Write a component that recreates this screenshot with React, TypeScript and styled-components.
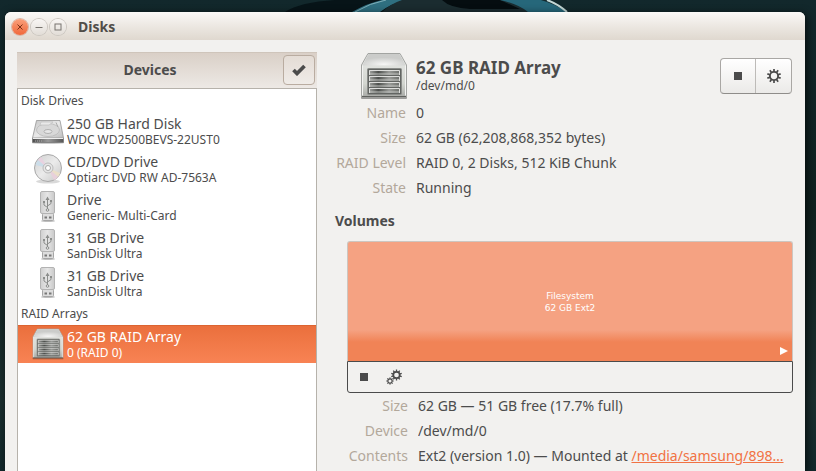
import React from 'react';
import styled, { createGlobalStyle, css } from 'styled-components';

const sans = '"Noto Sans", "Open Sans", sans-serif';

const GlobalStyle = createGlobalStyle`
  *, *::before, *::after { box-sizing: border-box; }
  body { margin: 0; background: #10262a; font-family: ${sans}; color: #4c4c4c; overflow: hidden; }
  button { font: inherit; color: inherit; padding: 0; margin: 0; border: 0; background: none; }
  dl, dt, dd, ul, h1, h2, h3, p { margin: 0; padding: 0; }
`;

const Desktop = styled.div`
  position: relative;
  min-height: 100vh;
  padding: 12px 11px 0 5px;
  background: linear-gradient(to bottom, #12282c 0, #10211f 45%, #1b2f2f 85%, #12282b 100%);
`;

const Wallpaper = styled.svg`
  position: absolute;
  top: 0;
  left: 0;
  width: 100%;
  height: 12px;
`;

const Window = styled.main`
  position: relative;
  display: flex;
  flex-direction: column;
  height: calc(100vh - 12px);
  background: #f2f1ef;
  border-radius: 6px 6px 0 0;
  box-shadow: 2px 2px 8px rgba(0, 0, 0, 0.7);
  overflow: hidden;
`;

const TitleBar = styled.header`
  display: flex;
  align-items: center;
  flex: none;
  gap: 3px;
  height: 28px;
  padding: 1px 7px 0;
  background: linear-gradient(#fbfaf8 0, #efebe6 40%, #dfd8cf 100%);
`;

const WindowButton = styled.button<{ $close?: boolean }>`
  display: grid;
  place-items: center;
  width: 16px;
  height: 16px;
  border-radius: 50%;
  box-shadow: 0 0 0 1px ${p => (p.$close ? '#d9b5a5' : '#cbc6c0')};
  color: ${p => (p.$close ? '#7a3218' : '#77736e')};
  background: ${p => (p.$close
    ? 'linear-gradient(#f9a07b, #f0683a)'
    : 'linear-gradient(#f8f6f4, #e2ddd7)')};
`;

const WindowTitle = styled.h1`
  margin-left: 9px;
  font-size: 14px;
  line-height: 20px;
  font-weight: 700;
  color: #504c48;
`;

const Body = styled.div`
  display: flex;
  flex: 1;
  gap: 18px;
  min-height: 0;
  padding: 12px 12px 0;
`;

const Sidebar = styled.nav`
  display: flex;
  flex-direction: column;
  flex: none;
  width: 300px;
`;

const SidebarHeader = styled.div`
  display: grid;
  grid-template-columns: 1fr 32px;
  align-items: center;
  height: 36px;
  padding-right: 2px;
  background: linear-gradient(#d9cfc6, #ede9e5);
  box-shadow: inset 0 1px #cfc5bb;
`;

const SidebarTitle = styled.h2`
  font-size: 14px;
  line-height: 20px;
  text-align: center;
`;

const CheckButton = styled.button`
  display: grid;
  place-items: center;
  height: 30px;
  border: 1px solid #b9aca0;
  border-radius: 4px;
  background: linear-gradient(#e4dcd5, #efebe7);
`;

const DeviceList = styled.div`
  flex: 1;
  border: 1px solid #b6b2ab;
  border-bottom: 0;
  background: #fff;
`;

const Category = styled.h3`
  height: 23px;
  padding-left: 3px;
  font-size: 12px;
  line-height: 24px;
  font-weight: 400;
`;

const DeviceRow = styled.button<{ $selected?: boolean }>`
  display: flex;
  align-items: center;
  gap: 3px;
  width: 100%;
  height: 38px;
  padding-left: 14px;
  text-align: left;
  ${p => p.$selected && css`
    color: #fff;
    background: linear-gradient(#ea6f3c, #f88354);
    box-shadow: inset 0 1px #dc6431;
  `}
`;

const DeviceText = styled.span`
  display: flex;
  flex-direction: column;
`;

const DeviceName = styled.span`
  font-size: 14px;
  line-height: 17px;
`;

const DeviceModel = styled.span`
  font-size: 12px;
  line-height: 15px;
`;

const Details = styled.section`
  display: flex;
  flex-direction: column;
  flex: 1;
  min-width: 0;
`;

const Heading = styled.header`
  display: grid;
  grid-template-columns: 73px 1fr auto;
  gap: 8px;
  align-items: center;
  height: 48px;
`;

const HeadingIcon = styled.div`
  display: flex;
  justify-content: flex-end;
`;

const HeadingName = styled.h2`
  font-size: 17px;
  line-height: 20px;
  font-weight: 700;
`;

const HeadingPath = styled.p`
  font-size: 12px;
  line-height: 16px;
`;

const ButtonGroup = styled.div`
  display: flex;
  height: 36px;
  margin-right: 1px;
  border: 1px solid #a9a7a4;
  border-bottom-color: #8f8d8a;
  border-radius: 4px;
  background: linear-gradient(#fff, #ebeae8);
`;

const GroupButton = styled.button`
  display: grid;
  place-items: center;
  width: 34px;
  & + & {
    width: 36px;
    border-left: 1px solid #bdbbb8;
  }
`;

const Facts = styled.dl<{ $volume?: boolean }>`
  display: grid;
  grid-template-columns: ${p => (p.$volume ? '73px' : '71px')} minmax(0, 1fr);
  column-gap: 10px;
  grid-auto-rows: 25px;
  font-size: 14px;
  line-height: 25px;
  white-space: nowrap;
`;

const Label = styled.dt`
  justify-self: end;
  color: #b3a89b;
`;

const Value = styled.dd`
  overflow: hidden;
  text-overflow: ellipsis;
`;

const MountLink = styled.a`
  color: #f17243;
  text-decoration: underline;
`;

const SectionTitle = styled.h3`
  margin: 11px 0 10px;
  font-size: 14px;
  line-height: 20px;
`;

const VolumePanel = styled.div`
  margin-left: 12px;
`;

const Volume = styled.button`
  position: relative;
  display: flex;
  flex-direction: column;
  align-items: center;
  justify-content: center;
  width: 100%;
  height: 120px;
  border: 1px solid #cdc6c0;
  border-bottom: 0;
  border-radius: 3px 3px 0 0;
  color: #fff;
  font-family: "DejaVu Sans", sans-serif;
  font-size: 9px;
  line-height: 12px;
  background: linear-gradient(#f5a282 0, #f5a282 74%, #f18356 84%, #f18356 100%);
`;

const MountedMark = styled.svg`
  position: absolute;
  right: 4px;
  bottom: 6px;
`;

const VolumeToolbar = styled.div`
  display: flex;
  align-items: center;
  height: 32px;
  border: 1px solid #4b4b4b;
  border-radius: 0 0 3px 3px;
`;

const ToolButton = styled.button`
  display: grid;
  place-items: center;
  width: 32px;
  height: 30px;
  & + & {
    width: 28px;
  }
`;

function StopIcon() {
  return (
    <svg width="8" height="8" viewBox="0 0 8 8" aria-hidden="true">
      <rect width="8" height="8" fill="#4b4b4b" />
    </svg>
  );
}

interface GearProps {
  cx: number;
  cy: number;
  r: number;
  ring: number;
  outer: number;
  tooth: number;
  teeth: number;
}

function GearShape({ cx, cy, r, ring, outer, tooth, teeth }: GearProps) {
  return (
    <g stroke="#4b4b4b" fill="none" transform={`translate(${cx} ${cy})`}>
      <circle r={r} strokeWidth={ring} />
      {Array.from({ length: teeth }, (_, i) => (
        <path key={i} strokeWidth={tooth} d={`M0 ${-r}V${-outer}`} transform={`rotate(${(i * 360) / teeth})`} />
      ))}
    </g>
  );
}

function GearIcon() {
  return (
    <svg width="14" height="14" viewBox="0 0 14 14" aria-hidden="true">
      <GearShape cx={7} cy={7} r={4.1} ring={1.900} outer={7} tooth={1.700} teeth={10} />
    </svg>
  );
}

function GearsIcon() {
  return (
    <svg width="16" height="16" viewBox="0 0 16 16" aria-hidden="true">
      <GearShape cx={10.500} cy={6} r={3.200} ring={1.700} outer={5.500} tooth={1.300} teeth={10} />
      <GearShape cx={4} cy={12} r={2.100} ring={1.100} outer={3.700} tooth={1} teeth={8} />
    </svg>
  );
}

function HardDiskIcon() {
  return (
    <svg width="32" height="32" viewBox="0 0 32 32" aria-hidden="true">
      <defs>
        <linearGradient id="hdTop" x1="0" y1="0" x2="1" y2="1">
          <stop offset="0" stopColor="#c6c6c6" />
          <stop offset=".5" stopColor="#e9e9e9" />
          <stop offset="1" stopColor="#bdbdbd" />
        </linearGradient>
        <linearGradient id="hdFront">
          <stop offset="0" stopColor="#4c4c4c" />
          <stop offset=".5" stopColor="#999" />
          <stop offset="1" stopColor="#555" />
        </linearGradient>
      </defs>
      <ellipse cx="16" cy="28" rx="16" ry="1" fill="#000" opacity=".2" />
      <path d="M4.500 5.500H28L31.500 23H.5Z" fill="url(#hdTop)" stroke="#969696" strokeWidth=".8" />
      <path d="M.5 23.500H31.500V27.500H.5Z" fill="url(#hdFront)" stroke="#777" strokeWidth=".8" />
      <path d="M1 23.500H31" stroke="#eee" />
      <ellipse cx="16" cy="15" rx="11.500" ry="6.500" fill="#d8d8d8" stroke="#b9b9b9" strokeWidth=".8" />
      <ellipse cx="16" cy="16.500" rx="4" ry="2" fill="#e6e6e6" stroke="#a5a5a5" strokeWidth=".8" />
      <path d="M9 7H21L17 10H8Z" fill="#e9e9e9" stroke="#bbb" strokeWidth=".6" />
      <path d="M24 7.500L26 12" stroke="#aaa" />
      <path d="M3 26H11" stroke="#aaa" strokeDasharray="1 1" />
    </svg>
  );
}

function DiscIcon() {
  return (
    <svg width="32" height="32" viewBox="0 0 32 32" aria-hidden="true">
      <defs>
        <linearGradient id="disc" x1="0" y1="0" x2="1" y2="1">
          <stop offset="0" stopColor="#cfcfcf" />
          <stop offset=".5" stopColor="#ebebeb" />
          <stop offset="1" stopColor="#c6c6c6" />
        </linearGradient>
      </defs>
      <ellipse cx="16" cy="28.500" rx="12" ry="2" fill="#000" opacity=".15" />
      <circle cx="16" cy="15" r="13.500" fill="url(#disc)" stroke="#a9a9a9" />
      <path d="M16 15L3.500 12A13 13 0 0 1 6 7Z" fill="#cbdde9" />
      <path d="M16 15L6 7A13 13 0 0 1 9 4Z" fill="#e8d2e0" />
      <path d="M16 15L28 20A13 13 0 0 1 26 24Z" fill="#ebdfc8" />
      <path d="M16 15L26 24A13 13 0 0 1 22 27Z" fill="#e8d0da" />
      <circle cx="16" cy="15" r="5" fill="#e6e6e6" stroke="#bbb" />
      <circle cx="16" cy="15" r="2.500" fill="#fff" stroke="#aaa" />
    </svg>
  );
}

function UsbIcon() {
  return (
    <svg width="32" height="32" viewBox="0 0 32 32" aria-hidden="true">
      <defs>
        <linearGradient id="usb">
          <stop offset="0" stopColor="#cfcfcf" />
          <stop offset=".5" stopColor="#e6e6e6" />
          <stop offset="1" stopColor="#c9c9c9" />
        </linearGradient>
      </defs>
      <ellipse cx="16" cy="30" rx="7" ry="1" fill="#000" opacity=".25" />
      <rect x="10.500" y="22.500" width="11" height="7" rx="1" fill="#ddd" stroke="#a5a5a5" />
      <path d="M12.500 26.500H15M17 26.500H19.500" stroke="#777" strokeWidth="2" />
      <rect x="8.500" y="0.500" width="14" height="22" rx="1.500" fill="url(#usb)" stroke="#b3b3b3" />
      <g stroke="#8b8d8b" fill="none">
        <path d="M15.500 18V8M15.500 16.500L12 14V11M15.500 15L19 12.500V10" />
        <circle cx="15.500" cy="19" r="1.300" />
      </g>
      <path d="M15.500 5.500L13.500 9H17.500ZM11 10H13V12H11ZM18 9H20V11H18Z" fill="#8b8d8b" />
    </svg>
  );
}

function RaidIcon({ size, id }: { size: number; id: string }) {
  return (
    <svg width={size} height={size} viewBox="0 0 48 48" aria-hidden="true">
      <defs>
        <radialGradient id={`${id}Top`} cx=".5" cy=".9" r=".6">
          <stop offset="0" stopColor="#f6f6f5" />
          <stop offset="1" stopColor="#cbccca" />
        </radialGradient>
        <linearGradient id={`${id}Front`} x2="0" y2="1">
          <stop offset="0" stopColor="#e9eae8" />
          <stop offset=".7" stopColor="#d3d6d0" />
          <stop offset="1" stopColor="#a9aba7" />
        </linearGradient>
        <linearGradient id={`${id}Bay`}>
          <stop offset="0" stopColor="#a3a5a2" />
          <stop offset=".3" stopColor="#4c4f4c" />
          <stop offset=".65" stopColor="#9a9c99" />
          <stop offset="1" stopColor="#6a6d69" />
        </linearGradient>
      </defs>
      <rect x="1" y="44" width="46" height="3" rx="1" fill="#000" opacity=".35" />
      <path d="M8 1.500H40L46.500 13V44.500H1.500V13Z" fill={`url(#${id}Front)`} stroke="#a2a4a1" />
      <path d="M8.500 2H39.500L45.500 13.500H2.500Z" fill={`url(#${id}Top)`} />
      <path d="M2.500 13.500V43.500M45.500 13.500V43.500" fill="none" stroke="#f2f2f1" />
      <path d="M2 44.500H46" stroke="#5f615e" />
      <rect x="7.500" y="16.500" width="34" height="26" rx="1" fill="#626562" stroke="#8b8d8a" />
      {[18, 24, 30, 36].map(y => (
        <g key={y}>
          <rect x="9" y={y} width="31" height="5" fill={`url(#${id}Bay)`} />
          <path d={`M9.500 ${y + 5}V${y + 0.5}H39.500V${y + 5}`} stroke="#dcdddb" fill="none" />
          <path d={`M10 ${y + 4}H39`} stroke="#c0c2bf" />
        </g>
      ))}
    </svg>
  );
}

const drives = [
  { name: '250 GB Hard Disk', model: 'WDC WD2500BEVS-22UST0', icon: <HardDiskIcon /> },
  { name: 'CD/DVD Drive', model: 'Optiarc DVD RW AD-7563A', icon: <DiscIcon /> },
  { name: 'Drive', model: 'Generic- Multi-Card', icon: <UsbIcon /> },
  { name: '31 GB Drive', model: 'SanDisk Ultra', icon: <UsbIcon /> },
  { name: '31 GB Drive', model: 'SanDisk Ultra', icon: <UsbIcon /> },
];

function Device({ name, model, icon, selected }: { name: string; model: string; icon: React.ReactNode; selected?: boolean }) {
  return (
    <DeviceRow type="button" $selected={selected} aria-current={selected}>
      {icon}
      <DeviceText>
        <DeviceName>{name}</DeviceName>
        <DeviceModel>{model}</DeviceModel>
      </DeviceText>
    </DeviceRow>
  );
}

export default function App() {
  return (
    <>
      <GlobalStyle />
      <Desktop>
        <Wallpaper viewBox="0 0 816 12" preserveAspectRatio="none" aria-hidden="true">
          <path d="M285 12Q300 2 335 0H541L567 12Z" fill="#071418" />
          <path d="M352 12Q368 3 382 0H406Q390 4 380 12Z" fill="#2f6f80" />
          <path d="M382 12Q390 4 402 0H520L540 12Z" fill="#1b2c30" />
          <path d="M442 0H500L520 9H470Q450 8 442 0Z" fill="#050d10" />
          <path d="M500 0H541Q555 4 567 12H528Q518 4 500 0Z" fill="#26677a" />
          <path d="M547 0Q558 4 567 12" stroke="#c4d8d6" strokeWidth="2" fill="none" />
          <path d="M355 12Q370 3 386 0" stroke="#7fb0ba" fill="none" />
        </Wallpaper>
        <Window>
          <TitleBar>
            <WindowButton type="button" $close aria-label="Close">
              <svg width="8" height="8" viewBox="0 0 8 8"><path d="M1.500 1.500L6.500 6.500M6.500 1.500L1.500 6.500" stroke="currentColor" /></svg>
            </WindowButton>
            <WindowButton type="button" aria-label="Minimize">
              <svg width="8" height="8" viewBox="0 0 8 8"><path d="M.5 4.500H7.500" stroke="currentColor" /></svg>
            </WindowButton>
            <WindowButton type="button" aria-label="Maximize">
              <svg width="8" height="8" viewBox="0 0 8 8"><rect x="1" y="1" width="6" height="6" fill="none" stroke="currentColor" /></svg>
            </WindowButton>
            <WindowTitle>Disks</WindowTitle>
          </TitleBar>
          <Body>
            <Sidebar aria-label="Devices">
              <SidebarHeader>
                <SidebarTitle>Devices</SidebarTitle>
                <CheckButton type="button" aria-label="Select devices">
                  <svg width="14" height="12" viewBox="0 0 14 12" aria-hidden="true">
                    <path d="M1.500 6L5 9.500L12.500 2" stroke="#4b4b4b" strokeWidth="3.700" fill="none" />
                  </svg>
                </CheckButton>
              </SidebarHeader>
              <DeviceList>
                <Category>Disk Drives</Category>
                {drives.map((d, i) => <Device key={i} {...d} />)}
                <Category>RAID Arrays</Category>
                <Device name="62 GB RAID Array" model="0 (RAID 0)" icon={<RaidIcon size={32} id="raidSmall" />} selected />
              </DeviceList>
            </Sidebar>
            <Details>
              <Heading>
                <HeadingIcon><RaidIcon size={48} id="raidLarge" /></HeadingIcon>
                <div>
                  <HeadingName>62 GB RAID Array</HeadingName>
                  <HeadingPath>/dev/md/0</HeadingPath>
                </div>
                <ButtonGroup>
                  <GroupButton type="button" aria-label="Stop array"><StopIcon /></GroupButton>
                  <GroupButton type="button" aria-label="Array options"><GearIcon /></GroupButton>
                </ButtonGroup>
              </Heading>
              <Facts>
                <Label>Name</Label><Value>0</Value>
                <Label>Size</Label><Value>62 GB (62,208,868,352 bytes)</Value>
                <Label>RAID Level</Label><Value>RAID 0, 2 Disks, 512 KiB Chunk</Value>
                <Label>State</Label><Value>Running</Value>
              </Facts>
              <SectionTitle>Volumes</SectionTitle>
              <VolumePanel>
                <Volume type="button">
                  <span>Filesystem</span>
                  <span>62 GB Ext2</span>
                  <MountedMark width="8" height="8" viewBox="0 0 8 8" aria-hidden="true"><path d="M0 0L8 4L0 8Z" fill="#fff" /></MountedMark>
                </Volume>
                <VolumeToolbar>
                  <ToolButton type="button" aria-label="Unmount"><StopIcon /></ToolButton>
                  <ToolButton type="button" aria-label="Volume options"><GearsIcon /></ToolButton>
                </VolumeToolbar>
              </VolumePanel>
              <Facts $volume>
                <Label>Size</Label><Value>62 GB — 51 GB free (17.7% full)</Value>
                <Label>Device</Label><Value>/dev/md/0</Value>
                <Label>Contents</Label>
                <Value>Ext2 (version 1.0) — Mounted at <MountLink href="#mount">/media/samsung/898…</MountLink></Value>
              </Facts>
            </Details>
          </Body>
        </Window>
      </Desktop>
    </>
  );
}
